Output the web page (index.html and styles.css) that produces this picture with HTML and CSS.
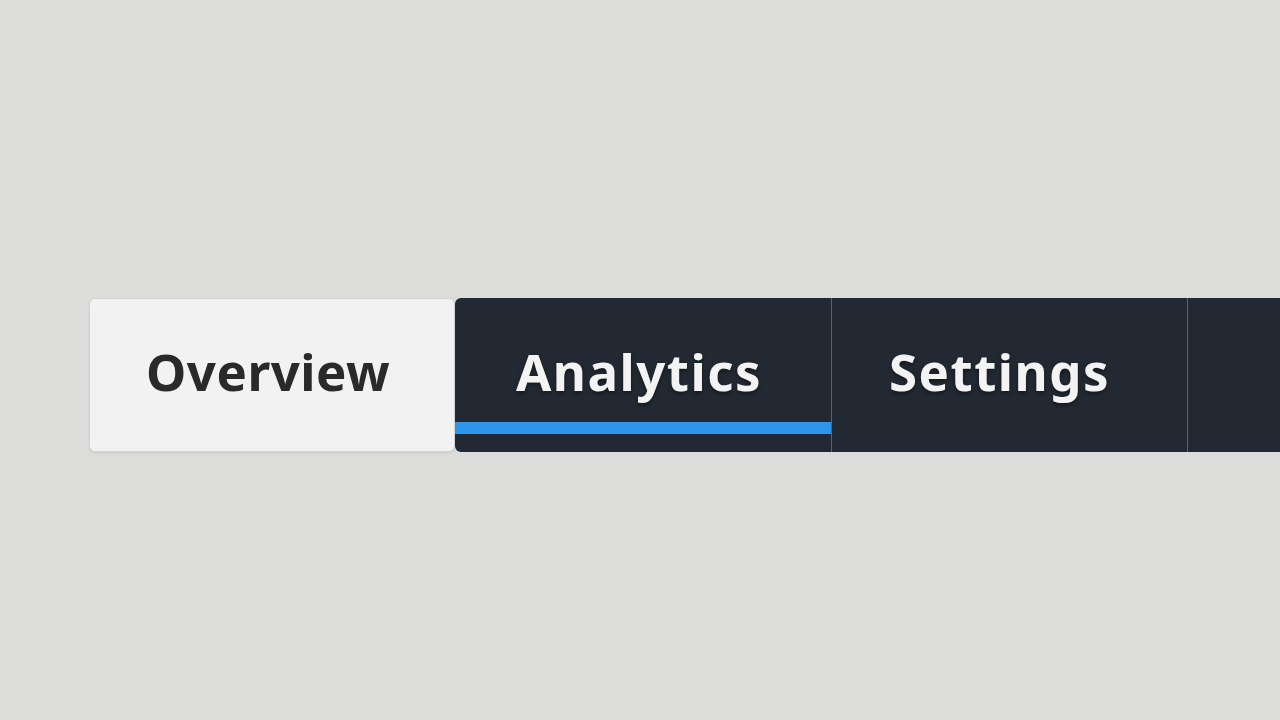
FILE: index.html
```html
<!DOCTYPE html>
<html lang="en">
<head>
    <meta charset="UTF-8">
    <meta name="viewport" content="width=device-width, initial-scale=1.0">
    <title>Tabs</title>
    <link rel="stylesheet" href="styles.css">
</head>
<body>
    <div class="stage">
        <nav class="tabs">
            <a class="tab tab-light" href="#">Overview</a>
            <a class="tab tab-dark active" href="#">Analytics</a>
            <a class="tab tab-dark settings" href="#">Settings</a>
            <a class="tab tab-dark more" href="#"></a>
        </nav>
    </div>
</body>
</html>
```

FILE: styles.css
```css
body {
    margin: 0;
    background-color: #dcdcdb;
    font-family: 'Noto Sans', 'Open Sans', sans-serif;
    overflow: hidden;
}
.stage {
    height: 720px;
    padding: 298px 0 0 89px;
    box-sizing: border-box;
}
.tabs {
    display: flex;
    height: 154px;
}
.tab {
    position: relative;
    display: flex;
    align-items: center;
    box-sizing: border-box;
    padding: 0 0 8px 56px;
    font-size: 51px;
    font-weight: 700;
    letter-spacing: 1.5px;
    text-decoration: none;
    flex-shrink: 0;
}
.tab-light {
    width: 366px;
    background-color: #f2f2f2;
    color: #2a2a2a;
    border: 1px solid #d2d2d2;
    border-radius: 6px;
    letter-spacing: 0.5px;
    box-shadow: 0 1px 2px rgba(0, 0, 0, 0.08);
}
.tab-dark {
    background-color: #232932;
    color: #f3f3f3;
    border-right: 1px solid #5d636b;
    text-shadow: 0 2px 4px rgba(0, 0, 0, 0.45);
}
.active {
    width: 377px;
    padding-left: 61px;
    border-radius: 6px 0 0 6px;
}
.active::after {
    content: "";
    position: absolute;
    left: 0;
    right: 0;
    bottom: 18px;
    height: 12px;
    background-color: #2f95ec;
}
.settings {
    width: 356px;
    padding-left: 57px;
}
.more {
    width: 93px;
    border-right: none;
}
```
